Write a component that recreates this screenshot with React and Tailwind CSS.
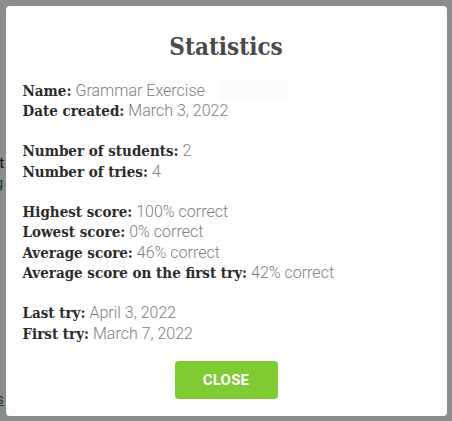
import React from "react";

const slab = { fontFamily: '"DejaVu Serif Condensed", "DejaVu Serif", serif' };

function Row({ label, value }) {
  return (
    <div className="h-[20.25px] leading-[20.25px] whitespace-nowrap flex items-baseline gap-[4px]">
      <span className="font-bold text-[#2b2b2b] text-[15px] leading-[20.25px]" style={slab}>{label}</span>
      <span className="font-light text-[#7e7e7e] text-[16px] leading-[20.25px] font-['Roboto',sans-serif]">{value}</span>
    </div>
  );
}

function BgRow({ left, right, leftCls = "", rightCls = "", h }) {
  return (
    <div className={`flex justify-between items-center text-[15px] font-['Roboto',sans-serif] ${h}`}>
      <span className={`-ml-[9px] ${leftCls}`}>{left}</span>
      <span className={`-mr-[8px] ${rightCls}`}>{right}</span>
    </div>
  );
}

export default function App() {
  return (
    <div className="relative w-[452px] h-[421px] overflow-hidden bg-white">
      <div className="flex flex-col text-[#222]">
        <div className="h-[153px]" />
        <BgRow left="at" right="J" h="h-[20px]" />
        <BgRow left="ig" right="" leftCls="text-[#1a7a1a] underline" h="h-[20px]" />
        <div className="h-[16px]" />
        <BgRow left="o" right="z" rightCls="text-[#6a4a1a]" h="h-[20px]" />
        <BgRow left="y" right="d" rightCls="text-[#1a3a8a]" h="h-[20px]" />
        <div className="h-[27px]" />
        <BgRow left="o" right="" h="h-[20px]" />
        <div className="h-[93px]" />
        <BgRow left="ts" right="" leftCls="text-[#1a7a1a] underline" h="h-[20px]" />
      </div>
      <div className="absolute inset-0 bg-black/45 flex items-center justify-center">
        <div className="w-[441px] h-[410px] bg-white rounded-[4px] flex flex-col">
          <h1
            className="text-center font-bold text-[24px] leading-[32px] text-[#4a4a4a] pt-[25px]"
            style={slab}
          >
            Statistics
          </h1>
          <div className="px-[17px] pt-[18px] relative">
            <div className="flex items-center">
              <Row label="Name:" value="Grammar Exercise" />
              <div className="ml-[15px] w-[68px] h-[19px] bg-[#fbfbfb]" />
            </div>
            <Row label="Date created:" value="March 3, 2022" />
            <div className="h-[20.25px]" />
            <Row label="Number of students:" value="2" />
            <Row label="Number of tries:" value="4" />
            <div className="h-[20.25px]" />
            <Row label="Highest score:" value="100% correct" />
            <Row label="Lowest score:" value="0% correct" />
            <Row label="Average score:" value="46% correct" />
            <Row label="Average score on the first try:" value="42% correct" />
            <div className="h-[20.25px]" />
            <Row label="Last try:" value="April 3, 2022" />
            <Row label="First try:" value="March 7, 2022" />
          </div>
          <div className="flex justify-center pt-[17px]">
            <button className="w-[103px] h-[38px] rounded-[4px] bg-[#7fcb34] text-white font-bold text-[15px] font-['Roboto',sans-serif] tracking-[0.2px]">
              CLOSE
            </button>
          </div>
        </div>
      </div>
    </div>
  );
}
